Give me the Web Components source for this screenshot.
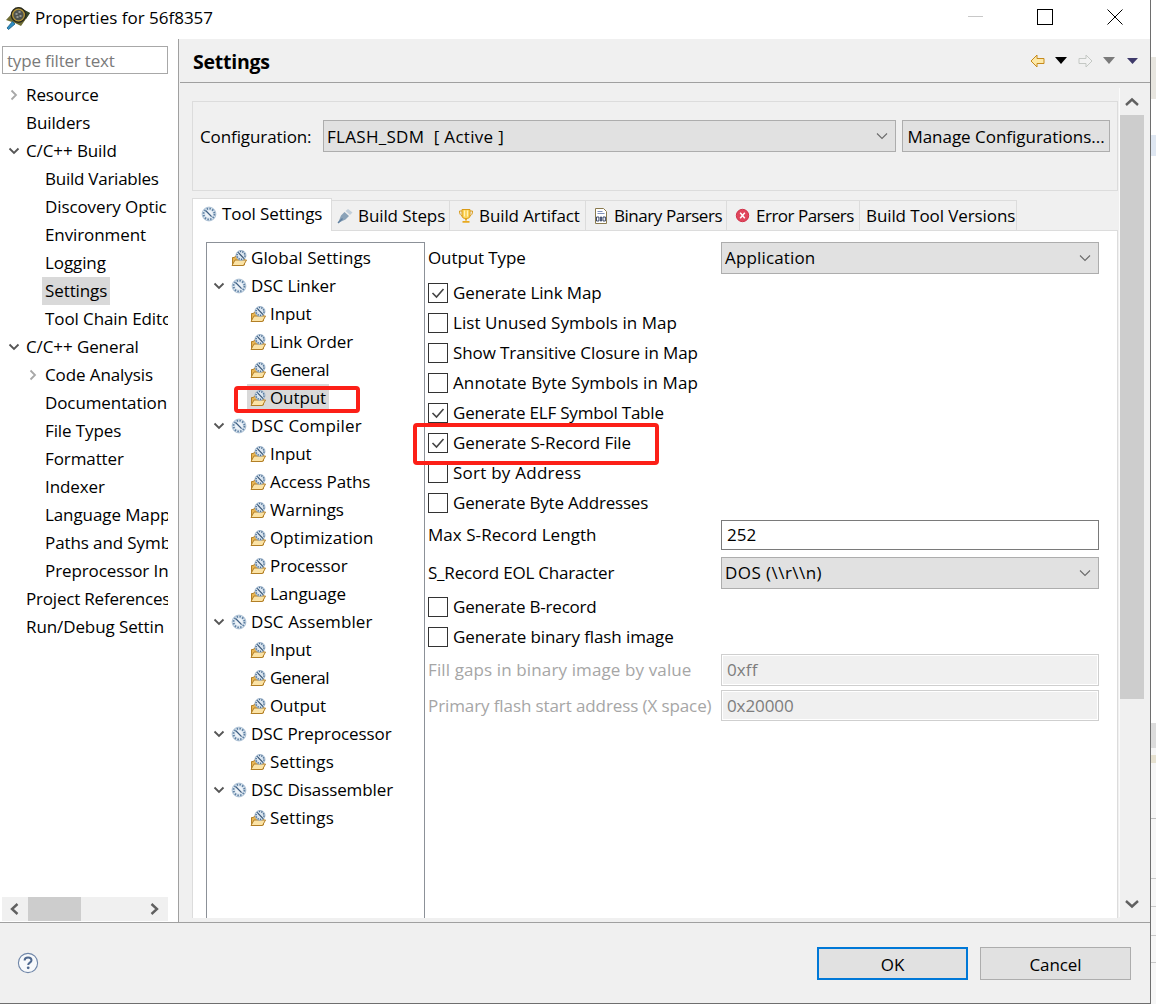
<!DOCTYPE html>
<html>
<head>
<meta charset="utf-8">
<title>Properties for 56f8357</title>
<style>
  html, body { margin: 0; padding: 0; }
  body {
    width: 1156px; height: 1004px; overflow: hidden; position: relative;
    font: 17px/22px "Open Sans", "Noto Sans", sans-serif;
    letter-spacing: -0.1px;
    color: #000;
    background: linear-gradient(#fff 0 57px, #e8e6e0 57px 99px, #fff 99px 135px, #dfe7f2 135px 156px, #fff 156px 723px,
      #dcdcdc 723px 748px, #f6f6f6 748px 755px, #e6e1d0 755px 763px, #f6f6f6 763px 818px, #bdbdbd 818px 819px,
      #f6f6f6 819px 878px, #c8c8c8 878px 879px, #f6f6f6 879px 906px, #c8c8c8 906px 907px, #f6f6f6 907px 935px,
      #c8c8c8 935px 936px, #f6f6f6 936px 962px, #c8c8c8 962px 963px, #f6f6f6 963px 1004px);
  }
</style>
</head>
<body>
<properties-dialog>
  <title-bar slot="title" style="letter-spacing:0">Properties for 56f8357</title-bar>

  <nav-pane slot="nav">
    <tree-row twisty="closed">Resource</tree-row>
    <tree-row>Builders</tree-row>
    <tree-row twisty="open">C/C++ Build</tree-row>
    <tree-row level="1" style="letter-spacing:-.25px">Build Variables</tree-row>
    <tree-row level="1">Discovery Optic</tree-row>
    <tree-row level="1">Environment</tree-row>
    <tree-row level="1">Logging</tree-row>
    <tree-row level="1" selected>Settings</tree-row>
    <tree-row level="1">Tool Chain Edito</tree-row>
    <tree-row twisty="open">C/C++ General</tree-row>
    <tree-row level="1" twisty="closed">Code Analysis</tree-row>
    <tree-row level="1">Documentation</tree-row>
    <tree-row level="1">File Types</tree-row>
    <tree-row level="1">Formatter</tree-row>
    <tree-row level="1">Indexer</tree-row>
    <tree-row level="1">Language Mapp</tree-row>
    <tree-row level="1">Paths and Symb</tree-row>
    <tree-row level="1">Preprocessor In</tree-row>
    <tree-row style="letter-spacing:-.2px">Project References</tree-row>
    <tree-row>Run/Debug Settin</tree-row>
  </nav-pane>

  <page-pane slot="page" heading="Settings">
    <config-group>
      <drop-combo slot="combo" style="--nudge:2px;letter-spacing:.3px">FLASH_SDM&nbsp; [ Active ]</drop-combo>
      <push-button slot="manage" style="padding-top:2px">Manage Configurations...</push-button>
    </config-group>

    <tab-folder>
      <folder-tab slot="tabs" active icon="gear" style="--w:140px;--pad:8px">Tool Settings</folder-tab>
      <folder-tab slot="tabs" icon="steps" style="--w:118px;--pad:5px">Build Steps</folder-tab>
      <folder-tab slot="tabs" icon="trophy" style="--w:136px;--pad:8px">Build Artifact</folder-tab>
      <folder-tab slot="tabs" icon="binary" style="--w:141px;--pad:7px;letter-spacing:-.45px">Binary Parsers</folder-tab>
      <folder-tab slot="tabs" icon="error" style="--w:133px;--pad:8px;letter-spacing:-.5px">Error Parsers</folder-tab>
      <folder-tab slot="tabs" style="--w:157px;--pad:6px">Build Tool Versions</folder-tab>

      <tool-tree slot="tree">
        <tree-row icon="folder" style="letter-spacing:.1px">Global Settings</tree-row>
        <tree-row twisty="open" icon="gear">DSC Linker</tree-row>
        <tree-row level="1" icon="folder">Input</tree-row>
        <tree-row level="1" icon="folder">Link Order</tree-row>
        <tree-row level="1" icon="folder" style="letter-spacing:-.5px">General</tree-row>
        <tree-row level="1" icon="folder" selected>Output</tree-row>
        <tree-row twisty="open" icon="gear" style="letter-spacing:.15px">DSC Compiler</tree-row>
        <tree-row level="1" icon="folder">Input</tree-row>
        <tree-row level="1" icon="folder">Access Paths</tree-row>
        <tree-row level="1" icon="folder">Warnings</tree-row>
        <tree-row level="1" icon="folder" style="letter-spacing:.1px">Optimization</tree-row>
        <tree-row level="1" icon="folder">Processor</tree-row>
        <tree-row level="1" icon="folder">Language</tree-row>
        <tree-row twisty="open" icon="gear" style="letter-spacing:.1px">DSC Assembler</tree-row>
        <tree-row level="1" icon="folder">Input</tree-row>
        <tree-row level="1" icon="folder" style="letter-spacing:-.5px">General</tree-row>
        <tree-row level="1" icon="folder">Output</tree-row>
        <tree-row twisty="open" icon="gear">DSC Preprocessor</tree-row>
        <tree-row level="1" icon="folder" style="letter-spacing:.1px">Settings</tree-row>
        <tree-row twisty="open" icon="gear">DSC Disassembler</tree-row>
        <tree-row level="1" icon="folder" style="letter-spacing:.1px">Settings</tree-row>
      </tool-tree>

      <option-form slot="form">
        <form-field label="Output Type"><drop-combo style="letter-spacing:.15px">Application</drop-combo></form-field>
        <check-row checked style="margin-top:4px">Generate Link Map</check-row>
        <check-row style="letter-spacing:.05px">List Unused Symbols in Map</check-row>
        <check-row>Show Transitive Closure in Map</check-row>
        <check-row style="letter-spacing:.1px">Annotate Byte Symbols in Map</check-row>
        <check-row checked style="letter-spacing:-.2px">Generate ELF Symbol Table</check-row>
        <check-row checked>Generate S-Record File</check-row>
        <check-row style="letter-spacing:.25px">Sort by Address</check-row>
        <check-row style="letter-spacing:-.2px">Generate Byte Addresses</check-row>
        <form-field label="Max S-Record Length" style="margin-top:2px;letter-spacing:.05px"><text-box style="height:30px">252</text-box></form-field>
        <form-field label="S_Record EOL Character" style="margin-top:7px;letter-spacing:-.2px"><drop-combo style="letter-spacing:.45px">DOS (\\r\\n)</drop-combo></form-field>
        <check-row style="margin-top:3px;letter-spacing:-.2px">Generate B-record</check-row>
        <check-row>Generate binary flash image</check-row>
        <form-field label="Fill gaps in binary image by value" disabled style="margin-top:2px;letter-spacing:.12px"><text-box disabled style="height:32px">0xff</text-box></form-field>
        <form-field label="Primary flash start address (X space)" disabled style="margin-top:4px"><text-box disabled style="height:31px">0x20000</text-box></form-field>
      </option-form>
    </tab-folder>
  </page-pane>

  <button-bar slot="footer">
    <push-button default style="width:151px;height:33px;padding-top:2px">OK</push-button>
    <push-button style="width:151px;height:33px;padding-top:2px">Cancel</push-button>
  </button-bar>
</properties-dialog>

<mark-box style="left:234px;top:386px;width:126px;height:27px"></mark-box>
<mark-box style="left:413px;top:423px;width:246px;height:42px"></mark-box>

<script>
const ICONS = {
  gear: `<circle cx="8" cy="8" r="6.9" fill="#dbe6f0" stroke="#9db5cc" stroke-width=".8"/>
    <circle cx="8" cy="8" r="5.4" fill="none" stroke="#5f80a3" stroke-width="1.8" stroke-dasharray="1.5 1.3"/>
    <circle cx="8" cy="8" r="3.6" fill="#eef3f8"/>
    <path d="M4.8 4.8l5.8 5.8" stroke="#3f5f82" stroke-width="1.3" fill="none"/>`,
  folder: `<path d="M1.5 15V7.5h2l1-1.5h3v2h6V15z" fill="#e8b552" stroke="#b27f26"/>
    <path d="M1 15.5L4 10h11.5l-3 5.5z" fill="#fbe3a6" stroke="#b27f26" stroke-linejoin="round"/>
    <circle cx="10" cy="5.4" r="5" fill="#dbe6f0" stroke="#8aa5c0" stroke-width=".7"/>
    <circle cx="10" cy="5.4" r="3.9" fill="none" stroke="#4d6f93" stroke-width="1.5" stroke-dasharray="1.3 1.1"/>
    <path d="M7.8 3.2l4.6 4.6" stroke="#34506f" stroke-width="1.2" fill="none"/>`,
  steps: `<path d="M1 15l3-7.5 3.5-3.5 4.5 4-3.5 3.5z" fill="#8aa2b8"/><path d="M8.5 3l2.5-2 4.5 3.5-2.5 2.5z" fill="#c2cfdb"/><path d="M1 15l4.5-4.5" stroke="#5f7f9f" stroke-width="1.5"/>`,
  trophy: `<path d="M4 1.5h8v6.5c0 1.6-1.6 2.6-4 2.6s-4-1-4-2.6z" fill="#fbd35c" stroke="#d99a16"/>
    <path d="M4 3H1.5c0 3 1 4.5 3 5M12 3h2.5c0 3-1 4.5-3 5" fill="none" stroke="#d99a16"/>
    <path d="M6.5 2.5v6M9.5 2.5v6" stroke="#fff2b8"/><path d="M7 10.5h2v2H7zM4.5 13h7v1.8h-7z" fill="#e8a91f"/>`,
  binary: `<path d="M2.5 .5h8l3 3v12h-11z" fill="#fff" stroke="#8a7a4e"/><path d="M4.5 3.5h5M4.5 5.5h7" stroke="#7f90b8"/>
    <path d="M3.5 9h2.4v4H3.5zM7.4 9h1.2v4H7.4zM10 9h2.4v4H10z" fill="none" stroke="#26365a" stroke-width=".9"/>`,
  error: `<circle cx="7.5" cy="7.5" r="6.2" fill="#e0465c" stroke="#d1324a"/><path d="M5.2 4.8l4.6 5.4M9.8 4.8l-4.6 5.4" stroke="#fff" stroke-width="1.5"/>`
};
function icon(name) {
  return `<svg width="16" height="16" viewBox="0 0 16 16" style="display:block;flex:none">${ICONS[name]}</svg>`;
}
const CHEV_DOWN = '<svg width="12" height="12" viewBox="0 0 12 12"><path d="M1 3.5l5 5 5-5" fill="none" stroke="#6a6a6a" stroke-width="1.1"/></svg>';

class PropertiesDialog extends HTMLElement {
  connectedCallback() {
    this.attachShadow({ mode: 'open' });
    this.shadowRoot.innerHTML = `
      <style>
        :host {
          display: grid; grid-template-rows: 39px 883px 82px; grid-template-columns: 178px 1fr;
          width: 1151px; height: 1004px; box-sizing: border-box;
          background: #f0f0f0; border-right: 1px solid #6e6e6e; border-bottom: 1px solid #6e6e6e;
        }
        .title { grid-column: 1 / 3; }
        .foot { grid-column: 1 / 3; }
      </style>
      <div class="title"><slot name="title"></slot></div>
      <slot name="nav"></slot>
      <slot name="page"></slot>
      <div class="foot"><slot name="footer"></slot></div>
    `;
  }
}

class TitleBar extends HTMLElement {
  connectedCallback() {
    this.attachShadow({ mode: 'open' });
    this.shadowRoot.innerHTML = `
      <style>
        :host { display: flex; align-items: center; height: 39px; background: #fff; padding-left: 6px; }
        .logo { width: 24px; height: 24px; margin: -3px 5px 0 0; flex: none; }
        .text { flex: 1; margin-top: -4px; }
        .caps { display: flex; gap: 54px; margin-right: 27px; margin-top: -6px; }
        .caps svg { display: block; }
      </style>
      <svg class="logo" viewBox="0 0 24 24">
        <path d="M0 14L12 1l12 6-9 13-6-3z" fill="#6e6c34"/>
        <path d="M13 1l11 6-4 6z" fill="#33452a"/>
        <path d="M6.5 15.5L1 22l1.5 1.5 6.5-5.5z" fill="#2f8fc4" stroke="#13587f" stroke-width=".8"/>
        <circle cx="12.5" cy="9" r="7.2" fill="#b99a3a" stroke="#2a2a1e" stroke-width="1.4"/>
        <circle cx="12.5" cy="9" r="5.2" fill="#4f544f"/>
        <path d="M9.5 8h2M12.5 6h2M10.5 11h2M13.5 10h2" stroke="#dcdcd4" stroke-width="1.2"/>
      </svg>
      <div class="text"><slot></slot></div>
      <div class="caps">
        <svg width="15" height="15"><path d="M0 7.5h15" stroke="#c8c8c8"/></svg>
        <svg width="16" height="16"><rect x=".5" y=".5" width="15" height="15" fill="none" stroke="#000"/></svg>
        <svg width="16" height="16"><path d="M.5 .5l15 15M15.5 .5l-15 15" stroke="#000" fill="none"/></svg>
      </div>
    `;
  }
}

class NavPane extends HTMLElement {
  connectedCallback() {
    this.attachShadow({ mode: 'open' });
    this.shadowRoot.innerHTML = `
      <style>
        :host { display: flex; flex-direction: column; background: #fff; --tree-pad: 8px; width: 178px; height: 883px; overflow: hidden; }
        .filter {
          box-sizing: border-box; height: 28px; width: 166px; margin: 7px 0 7px 2px; padding-left: 4px;
          border: 1px solid #a8a8a8; color: #7a7a7a; line-height: 28px; letter-spacing: -.2px;
        }
        .tree { flex: 1; width: 168px; overflow: hidden; min-height: 0; }
        .hbar { display: flex; align-items: center; box-sizing: border-box; height: 24px; width: 166px; margin: 0 0 1px 2px; background: #f0f0f0; }
        .thumb { width: 53px; height: 24px; background: #cdcdcd; }
        svg { display: block; margin: 0 9px 0 8px; }
        svg:last-child { margin-left: auto; }
      </style>
      <div class="filter">type filter text</div>
      <div class="tree"><slot></slot></div>
      <div class="hbar">
        <svg width="9" height="12"><path d="M7.5 1L2 6l5.5 5" fill="none" stroke="#606060" stroke-width="2.4"/></svg>
        <div class="thumb"></div>
        <svg width="9" height="12"><path d="M1.5 1L7 6l-5.5 5" fill="none" stroke="#606060" stroke-width="2.4"/></svg>
      </div>
    `;
  }
}

class TreeRow extends HTMLElement {
  connectedCallback() {
    const level = Number(this.getAttribute('level') || 0);
    const twisty = this.getAttribute('twisty');
    const name = this.getAttribute('icon');
    let arrow = '';
    if (twisty === 'open') arrow = '<svg width="12" height="12" viewBox="0 0 12 12"><path d="M1.5 3.5L6 8l4.5-4.5" fill="none" stroke="#555" stroke-width="1.8"/></svg>';
    if (twisty === 'closed') arrow = '<svg width="12" height="12" viewBox="0 0 12 12"><path d="M3.5 1.5L8 6l-4.5 4.5" fill="none" stroke="#a8a8a8" stroke-width="1.8"/></svg>';
    this.attachShadow({ mode: 'open' });
    this.shadowRoot.innerHTML = `
      <style>
        :host { display: flex; align-items: center; height: 28px; white-space: nowrap; padding-left: calc(var(--tree-pad, 6px) + ${level * 19}px); }
        .twisty { width: 12px; height: 12px; margin-right: 6px; flex: none; }
        .twisty svg { display: block; }
        .cell { display: flex; align-items: center; gap: 4px; height: 28px; padding: 0 3px; margin-left: -3px; }
        :host([selected]) .cell { background: #d9d9d9; }
      </style>
      <div class="twisty">${arrow}</div>
      <div class="cell">${name ? icon(name) : ''}<slot></slot></div>
    `;
  }
}

class PagePane extends HTMLElement {
  connectedCallback() {
    this.attachShadow({ mode: 'open' });
    this.shadowRoot.innerHTML = `
      <style>
        :host { display: flex; flex-direction: column; border-left: 1px solid #a0a0a0; height: 883px; background: #f0f0f0; min-width: 0; }
        .head { display: flex; align-items: center; height: 43px; box-sizing: content-box; border-bottom: 1px solid #a0a0a0; margin-left: 1px; padding-left: 13px; }
        h1 { flex: 1; margin: 0; padding-top: 2px; font-size: 19.5px; font-weight: 700; letter-spacing: -0.25px; }
        .nav { display: flex; align-items: center; margin-right: 12px; }
        .nav svg { display: block; }
        .body { flex: 1; display: flex; min-height: 0; }
        .content { width: 927px; padding: 18px 0 0 13px; box-sizing: content-box; }
        .vbar { width: 24px; margin-left: 0; border-left: 1px solid #fbfbfb; margin-top: 5px; margin-bottom: 5px; display: flex; flex-direction: column; align-items: center; }
        .thumb { width: 24px; height: 584px; margin-top: 1px; background: #cdcdcd; }
        .up { height: 26px; display: flex; align-items: center; }
        .down { margin-top: auto; height: 26px; display: flex; align-items: center; }
      </style>
      <div class="head">
        <h1>${this.getAttribute('heading')}</h1>
        <div class="nav">
          <svg width="15" height="14" style="margin-right:10px"><path d="M7 1L1 7l6 6v-3.5h7v-5H7z" fill="#fde9a8" stroke="#c68a1c"/></svg>
          <svg width="12" height="7" style="margin-right:11px"><path d="M0 0h12L6 7z" fill="#000"/></svg>
          <svg width="15" height="14" style="margin-right:10px"><path d="M8 1l6 6-6 6V9.5H1v-5h7z" fill="#f2f2f2" stroke="#c4c8c4"/></svg>
          <svg width="12" height="7" style="margin-right:12px"><path d="M0 0h12L6 7z" fill="#7a7a7a"/></svg>
          <svg width="11" height="6"><path d="M0 0h11L5.5 6z" fill="#3e3a6a"/></svg>
        </div>
      </div>
      <div class="body">
        <div class="content"><slot></slot></div>
        <div class="vbar">
          <div class="up"><svg width="14" height="9"><path d="M1 8l6-5.5L13 8" fill="none" stroke="#606060" stroke-width="2.4"/></svg></div>
          <div class="thumb"></div>
          <div class="down"><svg width="14" height="9"><path d="M1 1l6 5.5L13 1" fill="none" stroke="#606060" stroke-width="2.4"/></svg></div>
        </div>
      </div>
    `;
  }
}

class ConfigGroup extends HTMLElement {
  connectedCallback() {
    this.attachShadow({ mode: 'open' });
    this.shadowRoot.innerHTML = `
      <style>
        :host {
          display: flex; box-sizing: border-box; width: 926px; height: 90px; align-items: flex-start;
          border: 1px solid #dcdcdc; padding: 18px 7px 0 7px; gap: 6px;
        }
        .label { width: 117px; flex: none; line-height: 34px; white-space: nowrap; }
        .combo { flex: 1; min-width: 0; }
        .manage { width: 208px; flex: none; letter-spacing: -.02px; }
      </style>
      <div class="label">Configuration:</div>
      <div class="combo"><slot name="combo"></slot></div>
      <div class="manage"><slot name="manage"></slot></div>
    `;
  }
}

class DropCombo extends HTMLElement {
  connectedCallback() {
    this.attachShadow({ mode: 'open' });
    this.shadowRoot.innerHTML = `
      <style>
        :host {
          display: flex; align-items: center; justify-content: space-between; box-sizing: border-box; height: 32px; width: 100%;
          background: #e1e1e1; border: 1px solid #adadad; padding: 0 7px 0 3px; white-space: nowrap;
        }
        span { display: block; padding-top: var(--nudge, 0); }
        svg { display: block; }
      </style>
      <span><slot></slot></span>${CHEV_DOWN}
    `;
  }
}

class PushButton extends HTMLElement {
  connectedCallback() {
    this.attachShadow({ mode: 'open' });
    this.shadowRoot.innerHTML = `
      <style>
        :host {
          display: flex; align-items: center; justify-content: center; box-sizing: border-box; height: 32px;
          background: #e1e1e1; border: 1px solid #adadad; white-space: nowrap;
        }
        :host([default]) { border: 2px solid #0078d7; }
      </style>
      <slot></slot>
    `;
  }
}

class TabFolder extends HTMLElement {
  connectedCallback() {
    this.attachShadow({ mode: 'open' });
    this.shadowRoot.innerHTML = `
      <style>
        :host { display: block; width: 926px; margin-top: 7px; }
        .tabs { display: flex; align-items: flex-end; height: 32px; position: relative; z-index: 1; }
        .page {
          display: flex; align-items: stretch; box-sizing: border-box; height: 688px; background: #fff;
          border: 1px solid #dcdcdc; border-bottom: 0; padding: 11px 0 0 13px; gap: 3px;
        }
      </style>
      <div class="tabs"><slot name="tabs"></slot></div>
      <div class="page"><slot name="tree"></slot><slot name="form"></slot></div>
    `;
  }
}

class FolderTab extends HTMLElement {
  connectedCallback() {
    const name = this.getAttribute('icon');
    this.attachShadow({ mode: 'open' });
    this.shadowRoot.innerHTML = `
      <style>
        :host {
          display: flex; align-items: center; gap: 5px; box-sizing: border-box; width: var(--w); height: 30px; padding-left: var(--pad);
          background: #f0f0f0; border: 1px solid #dcdcdc; border-left: 0; border-bottom: 0; white-space: nowrap;
        }
        :host([active]) { height: 33px; background: #fff; border-left: 1px solid #dcdcdc; margin-bottom: -1px; padding-bottom: 2px; }
      </style>
      ${name ? icon(name) : ''}<slot></slot>
    `;
  }
}

class ToolTree extends HTMLElement {
  connectedCallback() {
    this.attachShadow({ mode: 'open' });
    this.shadowRoot.innerHTML = `
      <style>
        :host {
          display: block; box-sizing: border-box; width: 219px; height: 676px; padding-top: 1px; --tree-pad: 6px;
          border: 1px solid #8c9198; border-bottom: 0;
        }
      </style>
      <slot></slot>
    `;
  }
}

class OptionForm extends HTMLElement {
  connectedCallback() {
    this.attachShadow({ mode: 'open' });
    this.shadowRoot.innerHTML = `
      <style>:host { display: flex; flex-direction: column; width: 671px; }</style>
      <slot></slot>
    `;
  }
}

class FormField extends HTMLElement {
  connectedCallback() {
    this.attachShadow({ mode: 'open' });
    this.shadowRoot.innerHTML = `
      <style>
        :host { display: grid; grid-template-columns: 293px 378px; align-items: center; }
        :host([disabled]) .label { color: #a6a6a6; }
        .label { white-space: nowrap; }
      </style>
      <div class="label">${this.getAttribute('label')}</div>
      <slot></slot>
    `;
  }
}

class TextBox extends HTMLElement {
  connectedCallback() {
    this.attachShadow({ mode: 'open' });
    this.shadowRoot.innerHTML = `
      <style>
        :host {
          display: flex; align-items: center; box-sizing: border-box; width: 378px; padding-left: 5px;
          background: #fff; border: 1px solid #7a7a7a;
        }
        :host([disabled]) { background: #f0f0f0; border-color: #cfcfcf; color: #7d7d7d; box-shadow: inset 0 0 0 1px #fff; }
      </style>
      <slot></slot>
    `;
  }
}

class CheckRow extends HTMLElement {
  connectedCallback() {
    const tick = this.hasAttribute('checked')
      ? '<svg width="18" height="18" viewBox="0 0 18 18"><path d="M3.5 9l4 4 7-8" fill="none" stroke="#444" stroke-width="1.6"/></svg>'
      : '';
    this.attachShadow({ mode: 'open' });
    this.shadowRoot.innerHTML = `
      <style>
        :host { display: flex; align-items: center; height: 30px; gap: 5px; white-space: nowrap; }
        .box { box-sizing: border-box; width: 20px; height: 20px; border: 1px solid #333; background: #fff; flex: none; }
        svg { display: block; }
      </style>
      <div class="box">${tick}</div><slot></slot>
    `;
  }
}

class ButtonBar extends HTMLElement {
  connectedCallback() {
    this.attachShadow({ mode: 'open' });
    this.shadowRoot.innerHTML = `
      <style>
        :host { display: flex; align-items: flex-start; gap: 12px; box-sizing: border-box; height: 81px; border-top: 1px solid #a0a0a0; padding: 24px 19px 0 17px; background: #f0f0f0; }
        .help { flex: 1; padding-top: 5px; }
        svg { display: block; }
      </style>
      <div class="help">
        <svg width="22" height="22" viewBox="0 0 22 22">
          <circle cx="11" cy="11" r="9.6" fill="#f7f9fb" stroke="#6f86a8" stroke-width="1.1"/>
          <path d="M7.6 8.6c0-2 1.5-3.2 3.5-3.2s3.4 1.1 3.4 2.8c0 2.4-3.3 2.4-3.3 4.8" fill="none" stroke="#50698f" stroke-width="2"/>
          <circle cx="11.2" cy="15.8" r="1.4" fill="#50698f"/>
        </svg>
      </div>
      <slot></slot>
    `;
  }
}

class MarkBox extends HTMLElement {
  connectedCallback() {
    this.attachShadow({ mode: 'open' });
    this.shadowRoot.innerHTML = `
      <style>
        :host { display: block; position: absolute; box-sizing: border-box; border: 4px solid #fc1f17; border-radius: 4px; }
      </style>
    `;
  }
}

customElements.define('properties-dialog', PropertiesDialog);
customElements.define('title-bar', TitleBar);
customElements.define('nav-pane', NavPane);
customElements.define('tree-row', TreeRow);
customElements.define('page-pane', PagePane);
customElements.define('config-group', ConfigGroup);
customElements.define('drop-combo', DropCombo);
customElements.define('push-button', PushButton);
customElements.define('tab-folder', TabFolder);
customElements.define('folder-tab', FolderTab);
customElements.define('tool-tree', ToolTree);
customElements.define('option-form', OptionForm);
customElements.define('form-field', FormField);
customElements.define('text-box', TextBox);
customElements.define('check-row', CheckRow);
customElements.define('button-bar', ButtonBar);
customElements.define('mark-box', MarkBox);
</script>
</body>
</html>
